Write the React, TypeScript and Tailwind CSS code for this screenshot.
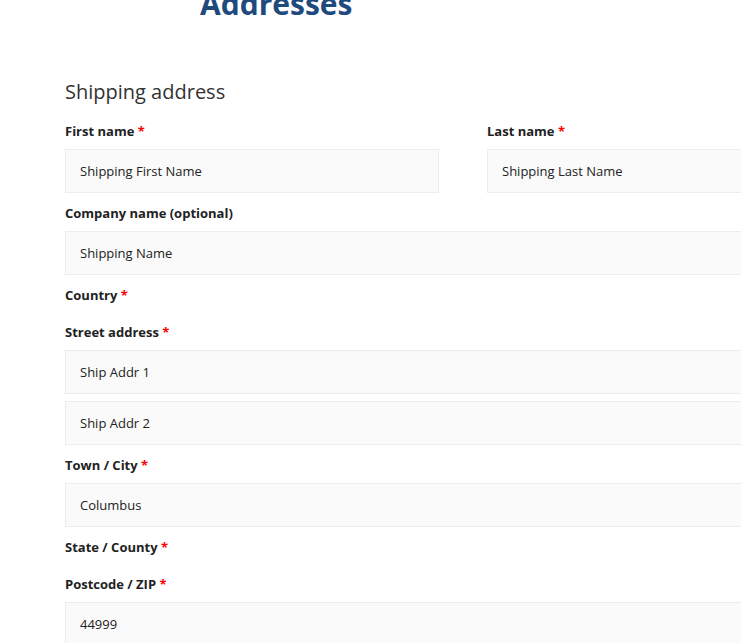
import React from 'react';

const font = { fontFamily: '"Open Sans", "Noto Sans", sans-serif' };

const Req = () => <span className="text-[#ff0000] font-bold"> *</span>;

const Label: React.FC<{ text: string; required?: boolean }> = ({ text, required }) => (
  <label className="block text-[13px] font-bold leading-5 text-[#222] mb-2">
    {text}
    {required && <Req />}
  </label>
);

const Input: React.FC<{ value: string; className?: string }> = ({ value, className }) => (
  <input
    readOnly
    value={value}
    className={`block w-full h-[44px] px-[14px] text-[13px] text-[#222] bg-[#fafafa] border border-[#ececec] outline-none ${className ?? ''}`}
    style={font}
  />
);

// fields without a visible control (country/state selects not rendered) get a bit more room
const Field: React.FC<{ label: string; required?: boolean; children?: React.ReactNode }> = ({
  label,
  required,
  children,
}) => (
  <div className={children ? 'mb-[10px]' : 'mb-[17px]'}>
    <Label text={label} required={required} />
    {children}
  </div>
);

export default function App() {
  return (
    <div className="w-[741px] h-[643px] overflow-hidden bg-white" style={font}>
      <div className="w-[861px] pl-[65px]">
        <h1 className="-mt-[16px] ml-[135px] text-[30px] leading-[40px] font-bold text-[#1e4a7e]">Addresses</h1>
        <h3 className="mt-[54px] text-[20px] leading-[28px] text-[#333] mb-[15px]">Shipping address</h3>

        <div className="grid grid-cols-2 gap-x-[48px]">
          <Field label="First name" required>
            <Input value="Shipping First Name" />
          </Field>
          <Field label="Last name" required>
            <Input value="Shipping Last Name" />
          </Field>
        </div>

        <Field label="Company name (optional)">
          <Input value="Shipping Name" />
        </Field>

        <Field label="Country" required />

        <Field label="Street address" required>
          <Input value="Ship Addr 1" className="mb-[7px]" />
          <Input value="Ship Addr 2" />
        </Field>

        <Field label="Town / City" required>
          <Input value="Columbus" />
        </Field>

        <Field label="State / County" required />

        <Field label="Postcode / ZIP" required>
          <Input value="44999" />
        </Field>
      </div>
    </div>
  );
}
